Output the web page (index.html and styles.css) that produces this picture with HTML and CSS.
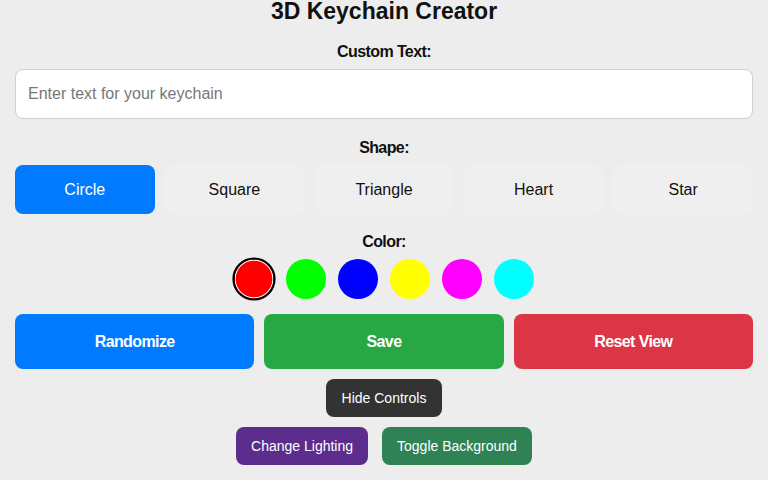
FILE: index.html
```html
<!DOCTYPE html>
<html lang="en">
<head>
<meta charset="utf-8">
<title>3D Keychain Creator</title>
<link rel="stylesheet" href="styles.css">
</head>
<body>
<div class="panel">
  <h1 class="title">3D Keychain Creator</h1>

  <div class="field">
    <label class="label" for="txt">Custom Text:</label>
    <input id="txt" class="text-input" type="text" placeholder="Enter text for your keychain">
  </div>

  <div class="field">
    <div class="label">Shape:</div>
    <div class="shapes">
      <button class="shape active">Circle</button>
      <button class="shape">Square</button>
      <button class="shape">Triangle</button>
      <button class="shape">Heart</button>
      <button class="shape">Star</button>
    </div>
  </div>

  <div class="field field-color">
    <div class="label label-glow">Color:</div>
    <div class="swatches">
      <span class="swatch swatch-red selected"></span>
      <span class="swatch swatch-green"></span>
      <span class="swatch swatch-blue"></span>
      <span class="swatch swatch-yellow"></span>
      <span class="swatch swatch-magenta"></span>
      <span class="swatch swatch-cyan"></span>
    </div>
  </div>

  <div class="actions">
    <button class="action action-blue">Randomize</button>
    <button class="action action-green">Save</button>
    <button class="action action-red">Reset View</button>
  </div>

  <div class="row">
    <button class="small small-dark">Hide Controls</button>
  </div>
  <div class="row">
    <button class="small small-purple">Change Lighting</button>
    <button class="small small-teal">Toggle Background</button>
  </div>
</div>
</body>
</html>
```

FILE: styles.css
```css
* { box-sizing: border-box; }

html, body {
  margin: 0;
  padding: 0;
  background: #ededed;
  font-family: "Liberation Sans", Arial, sans-serif;
  color: #111;
  overflow: hidden;
}

.panel {
  padding: 0 15px;
  text-align: center;
}

.title {
  margin: 0;
  font-size: 23px;
  line-height: 22px;
  font-weight: bold;
  color: #111;
}

.field {
  margin-top: 21px;
}

.field + .field {
  margin-top: 20px;
}

.field + .field-color {
  margin-top: 19px;
}

.label {
  display: block;
  font-size: 16px;
  font-weight: bold;
  line-height: 18px;
  letter-spacing: -0.6px;
  margin-bottom: 8px;
}

.label-glow {
  display: inline-block;
  text-shadow: 0 0 14px rgba(255, 255, 255, 0.9);
}

.text-input {
  display: block;
  width: 100%;
  height: 50px;
  padding: 0 12px;
  border: 1px solid #cfcfcf;
  border-radius: 8px;
  background: #fff;
  font-family: inherit;
  font-size: 16px;
  color: #222;
  outline: none;
}

.text-input::placeholder { color: #777; }

.shapes {
  display: flex;
  gap: 10px;
}

.shape {
  flex: 1;
  height: 49px;
  border: none;
  border-radius: 8px;
  background: #efefef;
  font-family: inherit;
  font-size: 16px;
  color: #111;
}

.shape.active {
  background: #007bff;
  color: #fff;
}

.swatches {
  display: flex;
  justify-content: center;
  gap: 12px;
}

.swatch {
  width: 40px;
  height: 40px;
  border-radius: 50%;
  display: block;
}

.swatch.selected {
  border: 2px solid #000;
  box-shadow: inset 0 0 0 1px #fff;
  transform: scale(1.08);
}

.swatch-red { background: #ff0000; }
.swatch-green { background: #00ff00; }
.swatch-blue { background: #0000ff; }
.swatch-yellow { background: #ffff00; }
.swatch-magenta { background: #ff00ff; }
.swatch-cyan { background: #00ffff; }

.actions {
  display: flex;
  gap: 10px;
  margin-top: 15px;
}

.action {
  flex: 1;
  height: 55px;
  border: none;
  border-radius: 8px;
  font-family: inherit;
  font-size: 16px;
  font-weight: bold;
  letter-spacing: -0.6px;
  color: #fff;
}

.action-blue { background: #007bff; }
.action-green { background: #28a745; }
.action-red { background: #dc3545; }

.row {
  display: flex;
  justify-content: center;
  gap: 14px;
  margin-top: 10px;
}

.small {
  height: 38px;
  padding: 0 15px;
  border: none;
  border-radius: 8px;
  font-family: inherit;
  font-size: 14px;
  color: #fff;
}

.small-dark { background: #333; padding: 0 16px; }
.small-purple { background: #5c2d8d; }
.small-teal { background: #2e8254; }
```
